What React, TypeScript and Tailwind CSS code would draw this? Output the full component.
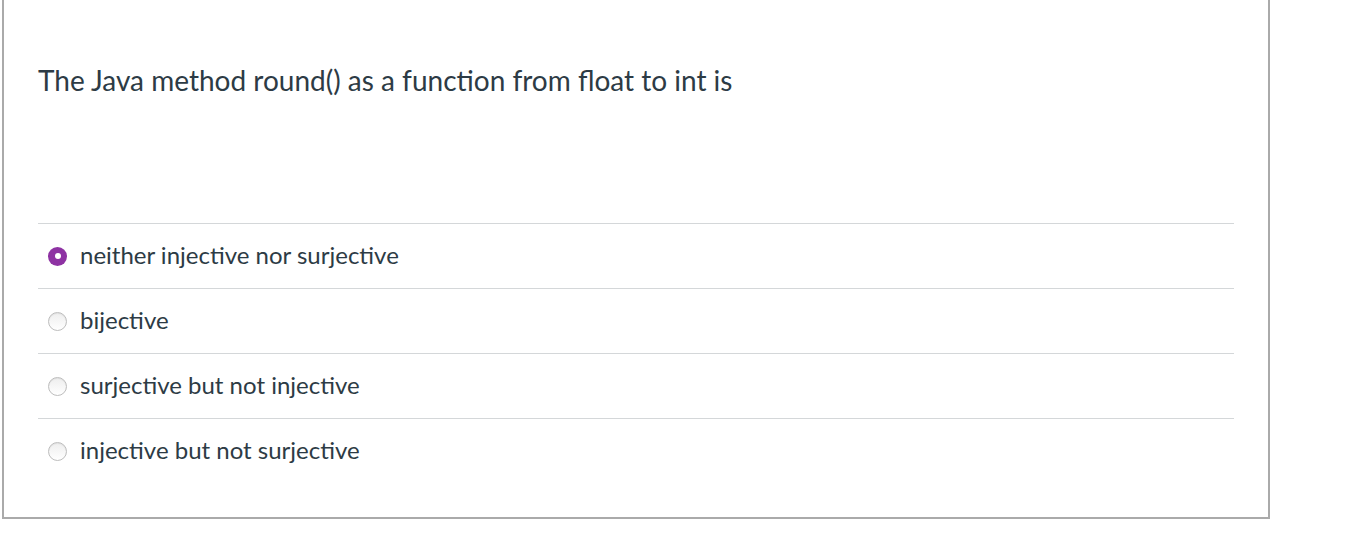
export default function App() {
  const answers = [
    { id: 'a1', label: 'neither injective nor surjective', checked: true },
    { id: 'a2', label: 'bijective', checked: false },
    { id: 'a3', label: 'surjective but not injective', checked: false },
    { id: 'a4', label: 'injective but not surjective', checked: false },
  ];

  return (
    <div className="w-full h-[539px] bg-white font-['Lato','Noto_Sans',sans-serif] text-[#2d3b45]">
      <div className="ml-[2px] w-[1268px] h-[519px] border-x-2 border-b-2 border-[#aaaaaa] pl-[34px] pr-[34px]">
        <p className="pt-[63px] text-[28px] leading-[34px]">
          The Java method round() as a function from float to int is
        </p>

        <div className="mt-[126px]">
          {answers.map((a) => (
            <label key={a.id} className="flex items-center h-[65px] border-t border-[#d4d7d9] pl-[10px] cursor-pointer">
              {a.checked ? (
                <span className="w-[19px] h-[19px] rounded-full bg-[#8e32a3] flex items-center justify-center">
                  <span className="w-[6px] h-[6px] rounded-full bg-white"></span>
                </span>
              ) : (
                <span className="w-[19px] h-[19px] rounded-full border border-[#bdbdbd] bg-gradient-to-b from-[#eeeeee] to-white shadow-[inset_0_1px_1px_rgba(0,0,0,0.06)]"></span>
              )}
              <span className="ml-[13px] text-[24px] leading-[28px] -translate-y-px">{a.label}</span>
            </label>
          ))}
        </div>
      </div>
    </div>
  );
}
